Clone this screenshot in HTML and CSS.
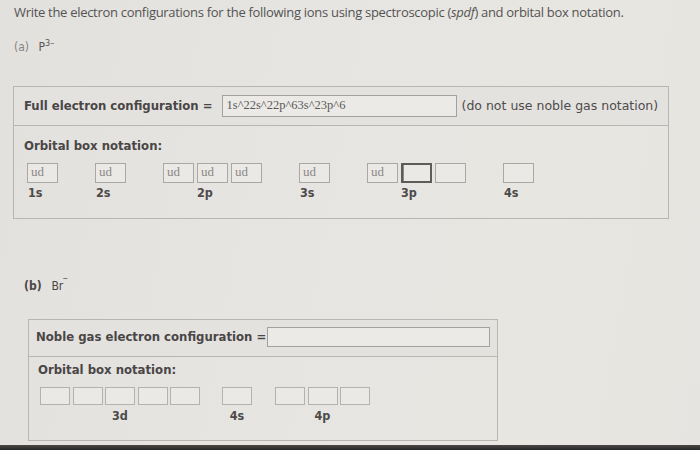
FILE: index.html
```html
<!DOCTYPE html>
<html>
<head>
<meta charset="utf-8">
<link rel="stylesheet" href="styles.css">
</head>
<body>
<div class="page">
  <p class="title">Write the electron configurations for the following ions using spectroscopic (<i>spdf</i>) and orbital box notation.</p>
  <p class="part part-a"><span class="tag">(a)</span> <span class="ion">P<sup>3&#8211;</sup></span></p>

  <div class="qbox qbox-a">
    <div class="config-row">
      <span class="lbl">Full electron configuration =</span>
      <span class="field field-a">1s^22s^22p^63s^23p^6</span>
      <span class="note">(do not use noble gas notation)</span>
    </div>
    <div class="orbitals">
      <div class="lbl heading">Orbital box notation:</div>
      <div class="groups">
        <div class="grp g1"><span class="ob">ud</span><span class="olab">1s</span></div>
        <div class="grp g1"><span class="ob">ud</span><span class="olab">2s</span></div>
        <div class="grp g3"><span class="ob">ud</span><span class="ob">ud</span><span class="ob">ud</span><span class="olab">2p</span></div>
        <div class="grp g1"><span class="ob">ud</span><span class="olab">3s</span></div>
        <div class="grp g3"><span class="ob">ud</span><span class="ob focus"></span><span class="ob"></span><span class="olab">3p</span></div>
        <div class="grp g1"><span class="ob"></span><span class="olab">4s</span></div>
      </div>
    </div>
  </div>

  <p class="part part-b"><span class="tagb">(b)</span> <span class="ion">Br<sup>&#8254;</sup></span></p>

  <div class="qbox qbox-b">
    <div class="config-row">
      <span class="lbl">Noble gas electron configuration =</span>
      <span class="field field-b"></span>
    </div>
    <div class="orbitals">
      <div class="lbl heading">Orbital box notation:</div>
      <div class="groups">
        <div class="grp g5"><span class="ob"></span><span class="ob"></span><span class="ob"></span><span class="ob"></span><span class="ob"></span><span class="olab">3d</span></div>
        <div class="grp g1"><span class="ob"></span><span class="olab">4s</span></div>
        <div class="grp g3"><span class="ob"></span><span class="ob"></span><span class="ob"></span><span class="olab">4p</span></div>
      </div>
    </div>
  </div>
  <div class="bezel"></div>
</div>
</body>
</html>
```

FILE: styles.css
```css
html, body {
  margin: 0;
  padding: 0;
}
body {
  background: #e4e3e0;
  width: 700px;
  height: 450px;
  overflow: hidden;
}
.page {
  width: 700px;
  height: 450px;
  display: flex;
  flex-direction: column;
  background: linear-gradient(100deg, #e2e1de 0%, #e6e5e2 45%, #e8e6e1 75%, #e5e4e0 100%);
}
.title {
  margin: 4px 0 0 14px;
  font-family: "Open Sans", sans-serif;
  font-size: 13px;
  line-height: 16px;
  letter-spacing: -0.3px;
  color: #555352;
}
.part {
  margin: 0;
  line-height: 16px;
  font-family: "DejaVu Sans Condensed", "DejaVu Sans", sans-serif;
  font-size: 12px;
}
.part-a {
  margin: 19px 0 0 14px;
  color: #888583;
}
.part-a .ion {
  margin-left: 6px;
  color: #5a5655;
}
.ion sup {
  font-size: 9px;
  line-height: 0;
  vertical-align: 5px;
}
.part-b {
  margin: 59px 0 0 24px;
  color: #4a4646;
  font-weight: bold;
}
.part-b .ion {
  margin-left: 6px;
  font-weight: normal;
  color: #4a4646;
}
.qbox {
  box-sizing: border-box;
  border: 1px solid #b8b6b2;
  display: flex;
  flex-direction: column;
}
.qbox-a {
  margin: 31px 0 0 13px;
  width: 656px;
  height: 133px;
}
.qbox-b {
  margin: 25px 0 0 28px;
  width: 470px;
  height: 122px;
}
.config-row {
  display: flex;
  align-items: center;
  border-bottom: 1px solid #b8b6b2;
  background: #e3e2df;
  box-sizing: border-box;
}
.qbox-a .config-row {
  height: 39px;
  padding-left: 10px;
  padding-bottom: 1px;
}
.qbox-b .config-row {
  height: 37px;
  padding-left: 7px;
  padding-bottom: 3px;
}
.lbl {
  font-family: "DejaVu Sans Condensed", "DejaVu Sans", sans-serif;
  font-weight: bold;
  font-size: 13px;
  color: #4a4646;
  white-space: nowrap;
}
.field {
  box-sizing: border-box;
  border: 1px solid #a3a19e;
  background: #ebeae7;
  font-family: "Liberation Serif", serif;
  font-size: 12.5px;
  color: #5b5858;
  display: flex;
  align-items: center;
  padding-left: 4px;
}
.field-a {
  width: 235px;
  height: 22px;
  margin-left: 9px;
}
.field-b {
  width: 223px;
  height: 20px;
  margin-left: 1px;
}
.note {
  margin-left: 5px;
  font-family: "DejaVu Sans", sans-serif;
  font-size: 12.5px;
  color: #4f4b4b;
  white-space: nowrap;
}
.orbitals {
  flex: 1;
  display: flex;
  flex-direction: column;
}
.qbox-a .orbitals {
  padding: 12px 0 0 10px;
}
.qbox-b .orbitals {
  padding: 5px 0 0 9px;
}
.heading {
  line-height: 16px;
}
.groups {
  display: flex;
  margin-top: 9px;
}
.qbox-a .groups {
  padding-left: 3px;
  gap: 37px;
}
.qbox-b .groups {
  padding-left: 2px;
}
.grp {
  display: grid;
  grid-auto-flow: column;
  align-items: start;
}
.qbox-a .grp {
  column-gap: 3px;
  grid-template-rows: 20px auto;
}
.qbox-b .grp {
  column-gap: 2.5px;
  grid-template-rows: 18px auto;
}
.ob {
  box-sizing: border-box;
  border: 1px solid #aaa8a5;
  background: #eae9e6;
  font-family: "Liberation Serif", serif;
  font-size: 13px;
  color: #8a8684;
  padding-left: 3px;
  line-height: 16px;
  grid-row: 1;
}
.qbox-a .ob {
  width: 31px;
  height: 20px;
}
.qbox-b .ob {
  width: 30px;
  height: 18px;
  border-color: #b4b2af;
}
.ob.focus {
  border: 2px solid #5e5c5b;
  box-shadow: inset 1px 0 0 #8a8888;
}
.olab {
  grid-row: 2;
  font-family: "DejaVu Sans Condensed", "DejaVu Sans", sans-serif;
  font-weight: bold;
  font-size: 12.5px;
  color: #4e4a4a;
  line-height: 16px;
  margin-top: 2px;
}
.qbox-a .g1 .olab { grid-column: 1; justify-self: start; padding-left: 1px; }
.qbox-a .g3 .olab { grid-column: 2; justify-self: start; }
.qbox-b .olab { justify-self: center; margin-top: 3px; }
.qbox-b .g1 .olab { grid-column: 1; }
.qbox-b .g3 .olab { grid-column: 2; }
.qbox-b .g5 .olab { grid-column: 3; }
.qbox-b .g5 { margin-right: 22px; }
.qbox-b .g1 { margin-right: 23px; }
.bezel {
  margin-top: auto;
  height: 5px;
  background: linear-gradient(#4a4746, #2a2827);
}
```
